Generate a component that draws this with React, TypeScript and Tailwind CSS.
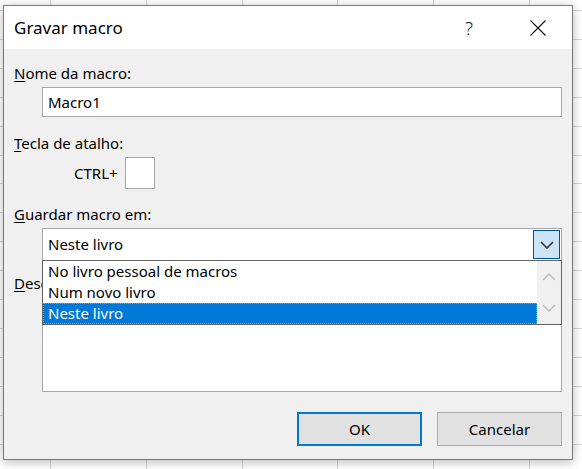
import React from 'react'

const font = { fontFamily: '"Noto Sans", "Liberation Sans", Arial, sans-serif' }

// linhas da planilha por trás da janela
const cols = [50, 146, 242, 337, 433, 529]
const rows = Array.from({ length: 17 }, (_, i) => Math.round(10 + i * 28.9))

function SheetGrid() {
  return (
    <svg className="absolute inset-0" width="582" height="469">
      {cols.map((x) => (
        <line key={'c' + x} x1={x + 0.5} y1="0" x2={x + 0.5} y2="469" stroke="#d4d4d4" />
      ))}
      {rows.map((y) => (
        <line key={'r' + y} x1="0" y1={y + 0.5} x2="582" y2={y + 0.5} stroke="#d4d4d4" />
      ))}
    </svg>
  )
}

function Label({ k, rest }: { k: string; rest: string }) {
  return (
    <div className="text-[15px] leading-[20px] text-black pl-[10px]">
      <span className="underline underline-offset-2 decoration-1">{k}</span>
      {rest}
    </div>
  )
}

function Chevron({ up, color }: { up?: boolean; color: string }) {
  return (
    <svg width="14" height="8" viewBox="0 0 14 8">
      <path
        d={up ? 'M1 7 L7 1 L13 7' : 'M1 1 L7 7 L13 1'}
        fill="none"
        stroke={color}
        strokeWidth="1.6"
      />
    </svg>
  )
}

export default function App() {
  const options = ['No livro pessoal de macros', 'Num novo livro', 'Neste livro']
  const selected = 2

  return (
    <div className="relative w-[582px] h-[469px] bg-white overflow-hidden" style={font}>
      <SheetGrid />

      {/* janela Gravar macro */}
      <div className="absolute left-[3px] top-[5px] w-[570px] h-[455px] border border-[#7a7a7a] bg-[#f0f0f0] shadow-[0_2px_10px_rgba(0,0,0,0.28)] flex flex-col">
        {/* barra de título */}
        <div className="h-[43px] bg-white flex items-center pl-[10px] shrink-0">
          <span className="text-[17px] leading-[24px] text-black flex-1">Gravar macro</span>
          <span className="text-[19px] leading-[24px] text-[#222] font-light w-[20px] mr-[45px]">?</span>
          <svg width="16" height="16" viewBox="0 0 16 16" className="mr-[26px]">
            <path d="M0.5 0.5 L15.5 15.5 M15.5 0.5 L0.5 15.5" stroke="#111" strokeWidth="1.1" />
          </svg>
        </div>

        {/* corpo */}
        <div className="relative flex-1 flex flex-col pt-[14px]">
          <Label k="N" rest="ome da macro:" />
          <div className="ml-[38px] mr-[10px] mt-[4px] h-[30px] bg-white border border-[#a8a8a8] flex items-center pl-[5px] text-[15px] text-black">
            Macro1
          </div>

          <div className="mt-[16px]">
            <Label k="T" rest="ecla de atalho:" />
          </div>
          <div className="flex items-center mt-[4px] pl-[70px] gap-[7px]">
            <span className="text-[15px] text-black">CTRL+</span>
            <div className="w-[30px] h-[32px] bg-white border border-[#a8a8a8]" />
          </div>

          <div className="mt-[15px]">
            <Label k="G" rest="uardar macro em:" />
          </div>
          <div className="relative ml-[38px] mr-[10px] mt-[4px] h-[33px] bg-white border border-[#a8a8a8] flex items-center pl-[5px] text-[15px] text-black">
            <span className="flex-1">Neste livro</span>
            <div className="w-[27px] h-[29px] mr-[1px] bg-[#cce4f7] border border-[#005499] flex items-center justify-center">
              <Chevron color="#333" />
            </div>
          </div>

          <div className="mt-[12px]">
            <Label k="D" rest="escrição:" />
          </div>
          <div className="ml-[38px] mr-[10px] mt-[5px] h-[94px] bg-white border border-[#a8a8a8]" />

          <div className="flex justify-end gap-[15px] mr-[10px] mt-[20px]">
            <button className="w-[125px] h-[34px] bg-[#e1e1e1] border-2 border-[#0078d7] text-[15px] text-black">
              OK
            </button>
            <button className="w-[125px] h-[34px] bg-[#e1e1e1] border border-[#adadad] text-[15px] text-black">
              Cancelar
            </button>
          </div>

          {/* lista aberta da caixa de combinação */}
          <div className="absolute left-[38px] top-[211px] w-[520px] h-[65px] bg-white border border-[#646464] flex">
            <div className="flex-1 flex flex-col">
              {options.map((o, i) => (
                <div
                  key={o}
                  className={
                    i === selected
                      ? 'h-[21px] leading-[19px] pl-[4px] text-[15px] bg-[#0078d7] text-white border border-dotted border-[#f08a24]'
                      : 'h-[21px] leading-[21px] pl-[5px] text-[15px] text-black'
                  }
                >
                  {o}
                </div>
              ))}
            </div>
            <div className="w-[24px] bg-[#f0f0f0] flex flex-col items-center justify-between py-[12px]">
              <Chevron up color="#c2c2c2" />
              <Chevron color="#c2c2c2" />
            </div>
          </div>
        </div>
      </div>
    </div>
  )
}
